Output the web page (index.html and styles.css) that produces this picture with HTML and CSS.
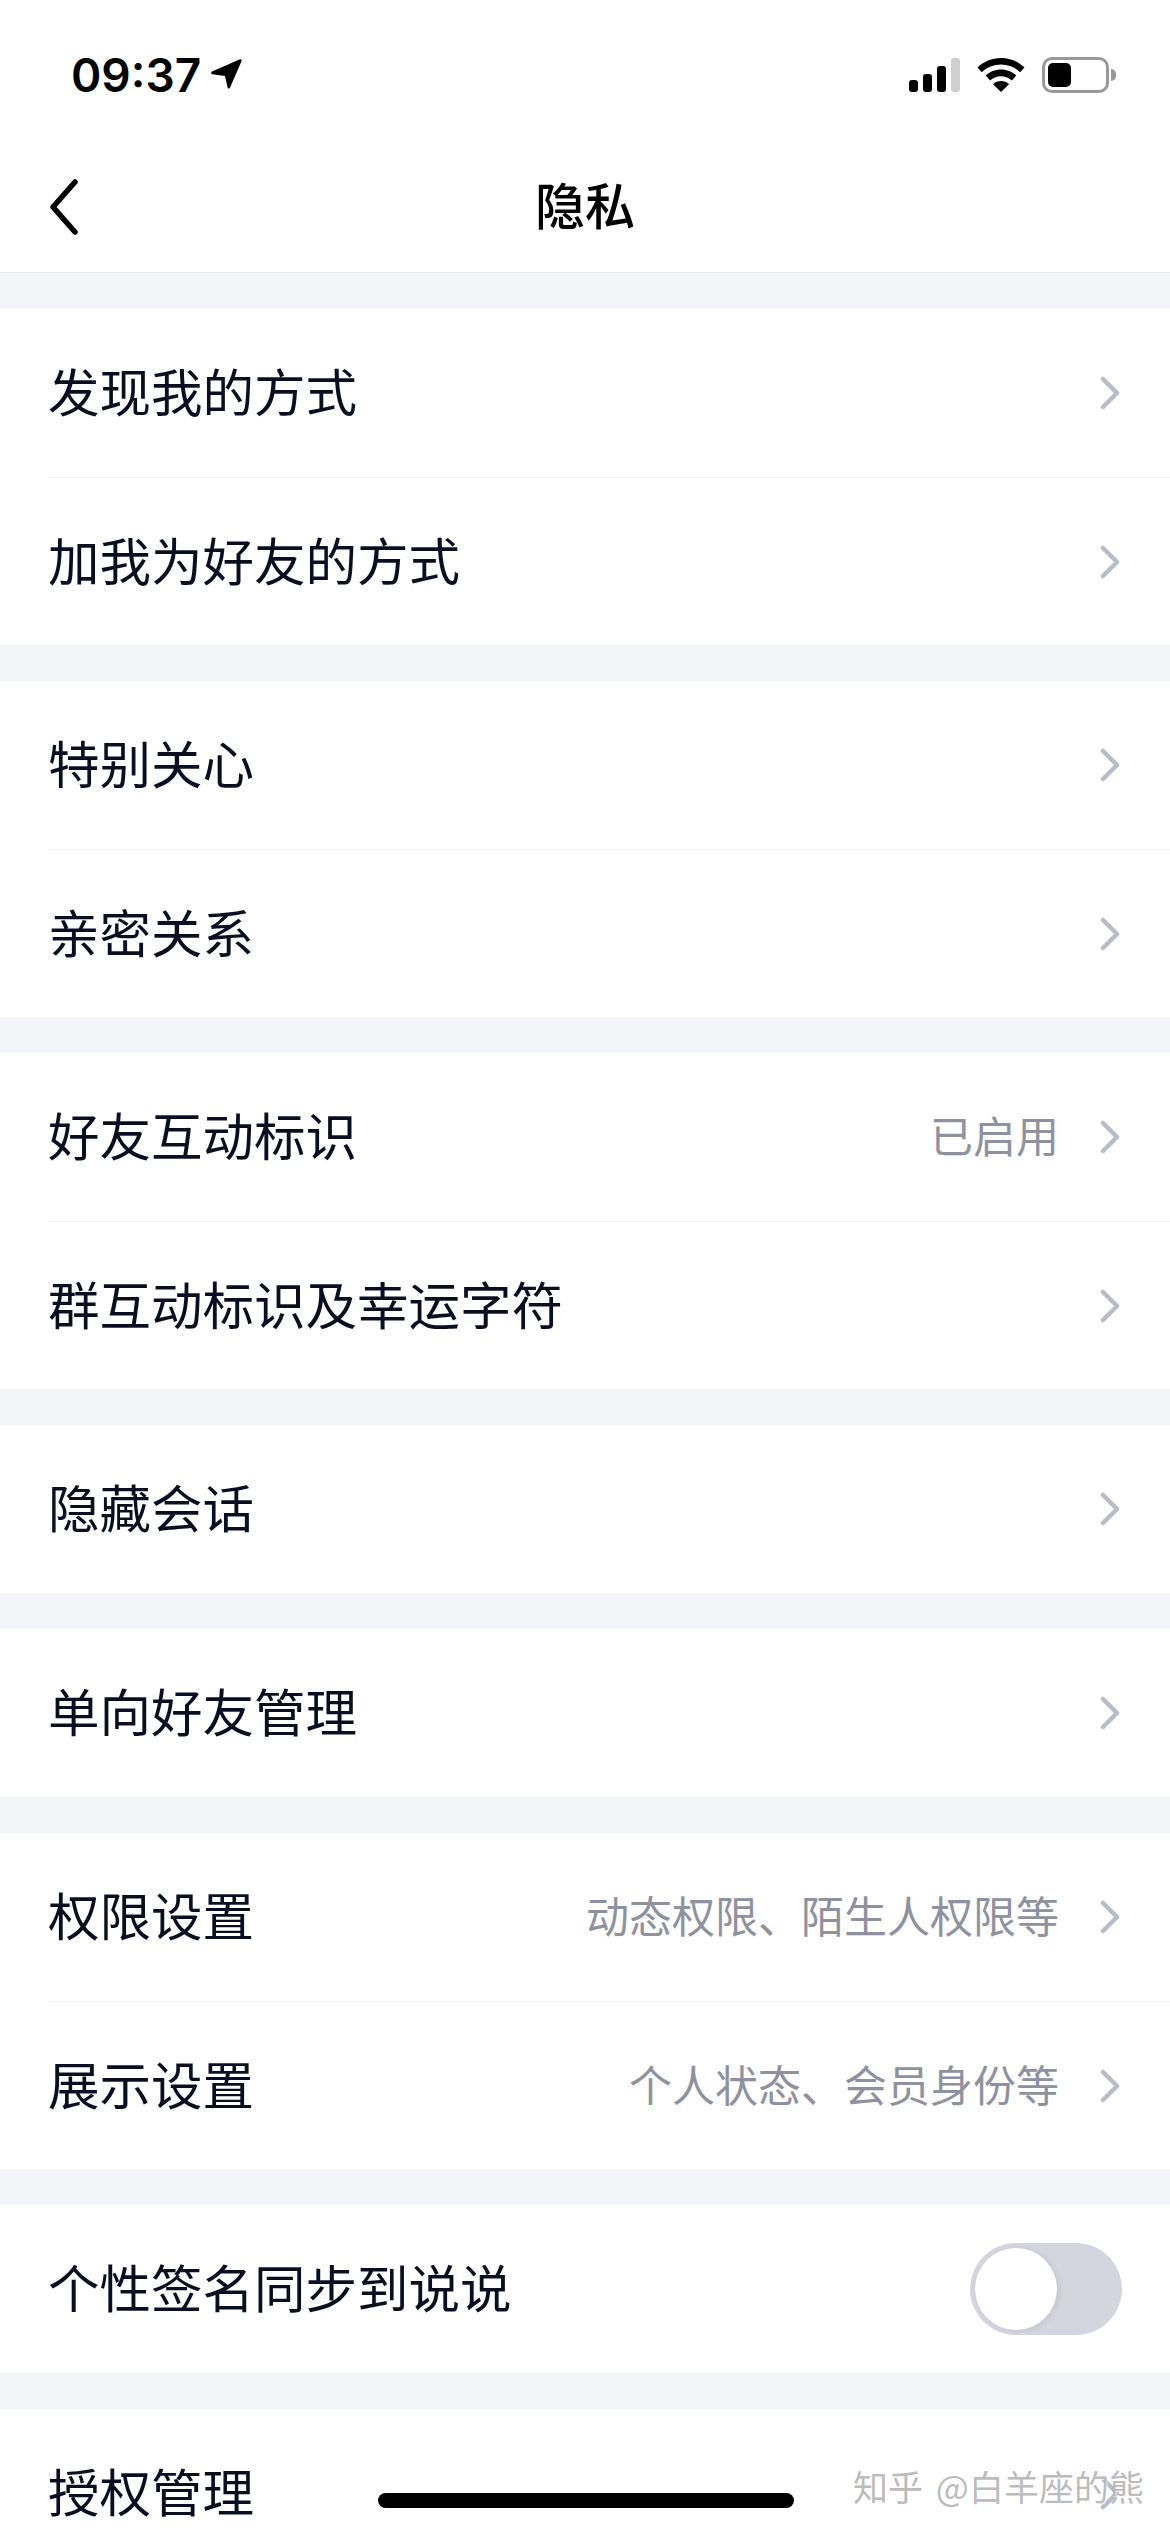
FILE: index.html
```html
<!DOCTYPE html>
<html lang="zh-CN">
<head>
    <meta charset="UTF-8">
    <meta name="viewport" content="width=device-width, initial-scale=1.0">
    <title>隐私</title>
    <link rel="stylesheet" href="styles.css">
</head>
<body>
    <div class="page">
        <div class="status-bar">
            <div class="status-left">
                <span class="time">09:37</span>
                <svg class="arrow" viewBox="0 0 33 32"><path d="M2 13.500 30 1.300c1-.4 2 .6 1.600 1.600L20 29.800c-.5 1.200-2.200 1-2.400-.3L15 18 2.300 16.300c-1.300-.2-1.500-2.300-.3-2.800z"/></svg>
            </div>
            <div class="status-right">
                <svg class="signal" viewBox="0 0 51 34">
                    <rect x="0" y="22" width="9" height="12" rx="3"/>
                    <rect x="14" y="16" width="9" height="18" rx="3"/>
                    <rect x="28" y="8" width="9" height="26" rx="3"/>
                    <rect x="42" y="0" width="9" height="34" rx="3" fill="#cfcfcf"/>
                </svg>
                <svg class="wifi" viewBox="0 0 48 34">
                    <path d="M24 0C14.800 0 6.600 3.600.5 9.400l4.300 4.900C9.700 9.500 16.500 6.600 24 6.600s14.300 2.900 19.200 7.700l4.300-4.900C41.400 3.600 33.200 0 24 0z"/>
                    <path d="M24 11.500c-6 0-11.300 2.300-15.300 6.100l4.400 4.900c2.800-2.700 6.600-4.300 10.900-4.300s8.100 1.600 10.900 4.300l4.400-4.900c-4-3.800-9.300-6.100-15.300-6.100z"/>
                    <path d="M24 23c-3.100 0-5.900 1.200-8 3.200l8 7.800 8-7.800c-2.100-2-4.900-3.200-8-3.200z"/>
                </svg>
                <div class="battery">
                    <div class="battery-body"><div class="battery-fill"></div></div>
                    <div class="battery-tip"></div>
                </div>
            </div>
        </div>

        <div class="nav-bar">
            <svg class="back" viewBox="0 0 30 56"><path d="M26 3 4 28l22 25"/></svg>
            <h1 class="nav-title">隐私</h1>
        </div>

        <div class="group">
            <div class="row"><span class="label">发现我的方式</span><svg class="chevron" viewBox="0 0 20 34"><path d="M3 3l14 14L3 31"/></svg></div>
            <div class="row"><span class="label">加我为好友的方式</span><svg class="chevron" viewBox="0 0 20 34"><path d="M3 3l14 14L3 31"/></svg></div>
        </div>

        <div class="group">
            <div class="row"><span class="label">特别关心</span><svg class="chevron" viewBox="0 0 20 34"><path d="M3 3l14 14L3 31"/></svg></div>
            <div class="row"><span class="label">亲密关系</span><svg class="chevron" viewBox="0 0 20 34"><path d="M3 3l14 14L3 31"/></svg></div>
        </div>

        <div class="group">
            <div class="row"><span class="label">好友互动标识</span><span class="value">已启用</span><svg class="chevron" viewBox="0 0 20 34"><path d="M3 3l14 14L3 31"/></svg></div>
            <div class="row"><span class="label">群互动标识及幸运字符</span><svg class="chevron" viewBox="0 0 20 34"><path d="M3 3l14 14L3 31"/></svg></div>
        </div>

        <div class="group">
            <div class="row"><span class="label">隐藏会话</span><svg class="chevron" viewBox="0 0 20 34"><path d="M3 3l14 14L3 31"/></svg></div>
        </div>

        <div class="group">
            <div class="row"><span class="label">单向好友管理</span><svg class="chevron" viewBox="0 0 20 34"><path d="M3 3l14 14L3 31"/></svg></div>
        </div>

        <div class="group">
            <div class="row"><span class="label">权限设置</span><span class="value">动态权限、陌生人权限等</span><svg class="chevron" viewBox="0 0 20 34"><path d="M3 3l14 14L3 31"/></svg></div>
            <div class="row"><span class="label">展示设置</span><span class="value">个人状态、会员身份等</span><svg class="chevron" viewBox="0 0 20 34"><path d="M3 3l14 14L3 31"/></svg></div>
        </div>

        <div class="group">
            <div class="row"><span class="label">个性签名同步到说说</span><div class="switch"><div class="knob"></div></div></div>
        </div>

        <div class="group">
            <div class="row"><span class="label">授权管理</span><svg class="chevron" viewBox="0 0 20 34"><path d="M3 3l14 14L3 31"/></svg></div>
        </div>

        <div class="watermark">知乎 @白羊座的熊</div>
        <div class="home-indicator"></div>
    </div>
</body>
</html>
```

FILE: styles.css
```css
html, body {
    margin: 0;
    padding: 0;
}

body {
    font-family: "Noto Sans CJK SC", "Noto Sans", sans-serif;
    background-color: #f4f5f8;
}

.page {
    position: relative;
    width: 1170px;
    height: 2532px;
    overflow: hidden;
    background-color: #f4f5f8;
}

/* status bar */
.status-bar {
    display: flex;
    justify-content: space-between;
    align-items: center;
    height: 108px;
    padding: 42px 54px 0 71px;
    box-sizing: border-box;
    background-color: #fff;
}

.status-left {
    display: flex;
    align-items: center;
    gap: 9px;
}

.time {
    font-family: Inter, sans-serif;
    font-size: 46px;
    font-weight: 600;
    line-height: 50px;
    color: #000;
}

.arrow {
    width: 33px;
    height: 32px;
    margin-top: -3px;
}

.status-right {
    display: flex;
    align-items: center;
    gap: 17px;
}

.signal {
    width: 51px;
    height: 34px;
}

.wifi {
    width: 48px;
    height: 34px;
}

.battery {
    display: flex;
    align-items: center;
    gap: 2px;
}

.battery-body {
    width: 67px;
    height: 36px;
    box-sizing: border-box;
    border: 3px solid #999;
    border-radius: 10px;
    padding: 3px;
}

.battery-fill {
    width: 23px;
    height: 100%;
    background-color: #000;
    border-radius: 5px;
}

.battery-tip {
    width: 5px;
    height: 12px;
    background-color: #999;
    border-radius: 0 6px 6px 0;
}

/* nav */
.nav-bar {
    position: relative;
    display: flex;
    align-items: center;
    justify-content: center;
    height: 165px;
    box-sizing: border-box;
    padding-top: 25px;
    background-color: #fff;
    border-bottom: 1px solid #e9e9ee;
}

.back {
    position: absolute;
    left: 49px;
    top: 71px;
    width: 30px;
    height: 56px;
    fill: none;
    stroke: #000;
    stroke-width: 5.5;
    stroke-linecap: round;
    stroke-linejoin: round;
}

.nav-title {
    margin: 0;
    font-size: 50px;
    font-weight: 500;
    line-height: 70px;
    color: #000;
}

/* list */
.group {
    margin-top: 36px;
    background-color: #fff;
}

.row {
    display: flex;
    align-items: center;
    height: 168px;
    box-sizing: border-box;
    margin-left: 48px;
    padding-right: 50px;
}

.row + .row {
    border-top: 1px solid #eeeef2;
}

.label {
    flex: 1;
    margin-bottom: 6px;
    font-size: 51.500px;
    line-height: 70px;
    color: #0a0e20;
}

.value {
    margin-right: 41px;
    margin-bottom: 6px;
    font-size: 43px;
    line-height: 60px;
    color: #8f929e;
}

.chevron {
    width: 20px;
    height: 34px;
    fill: none;
    stroke: #b9bbc8;
    stroke-width: 4.5;
    stroke-linecap: round;
    stroke-linejoin: round;
}

.switch {
    position: relative;
    width: 152px;
    height: 92px;
    margin-right: -2px;
    background-color: #d4d5df;
    border-radius: 46px;
}

.knob {
    position: absolute;
    left: 5px;
    top: 5px;
    width: 82px;
    height: 82px;
    background-color: #fff;
    border-radius: 50%;
    box-shadow: 2px 1px 6px rgba(0, 0, 0, 0.08);
}

/* overlays */
.watermark {
    position: absolute;
    left: 853px;
    top: 2464px;
    font-size: 35px;
    line-height: 44px;
    word-spacing: 5px;
    white-space: nowrap;
    color: rgba(170, 170, 170, 0.8);
    text-shadow: 1px 1px 1px rgba(255, 255, 255, 0.8);
}

.home-indicator {
    position: absolute;
    left: 378px;
    top: 2493px;
    width: 416px;
    height: 15px;
    background-color: #000;
    border-radius: 8px;
}
```
